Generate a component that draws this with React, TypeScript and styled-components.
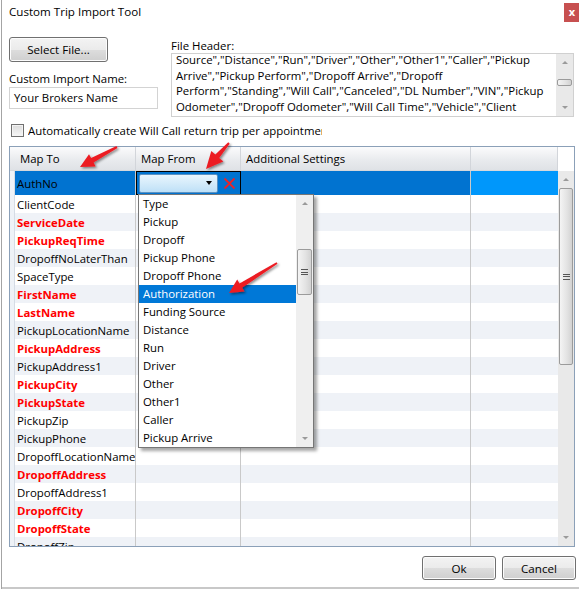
import React from "react";
import styled, { createGlobalStyle } from "styled-components";

const GlobalStyle = createGlobalStyle`
  html, body {
    margin: 0;
    padding: 0;
    background: #fff;
  }
  body {
    font-family: "Open Sans", "Liberation Sans", sans-serif;
    font-size: 11.4px;
    color: #000;
  }
  * {
    box-sizing: border-box;
  }
`;

const Window = styled.div`
  position: relative;
  width: 579px;
  height: 589px;
  overflow: hidden;
  background: #fff;
  box-shadow: inset 1px 0 0 #fff, inset 2px 0 0 #a4a4a4, inset 0 -2px 0 #c8c8c8;
`;

const TitleBar = styled.div`
  display: flex;
  justify-content: space-between;
  align-items: flex-start;
  height: 25px;
  padding-left: 9px;
`;

const Title = styled.div`
  margin-top: 4px;
  line-height: 16px;
  font-size: 11.6px;
`;

const CloseButton = styled.div`
  margin-top: 3px;
  width: 15px;
  height: 19px;
  background: #c75050;
  color: #fff;
  font-weight: 700;
  font-size: 11px;
  line-height: 18px;
  text-align: center;
  padding-left: 1px;
`;

const TopSection = styled.div`
  display: flex;
  margin-top: 12px;
  padding-left: 9px;
`;

const LeftColumn = styled.div`
  display: flex;
  flex-direction: column;
  width: 149px;
`;

const RightColumn = styled.div`
  display: flex;
  flex-direction: column;
  width: 403px;
  margin-left: 13px;
`;

const Button = styled.div<{ $w: number }>`
  width: ${({ $w }) => $w}px;
  height: ${({ $h }: { $h?: number }) => $h || 24}px;
  border: 1px solid #707070;
  border-radius: 3px;
  background: linear-gradient(#f3f3f3 0%, #ebebeb 50%, #dddddd 51%, #cfcfcf 100%);
  display: flex;
  align-items: center;
  justify-content: center;
  font-size: 11.6px;
  box-shadow: inset 0 0 0 1px #fcfcfc;
`;

const Label = styled.div<{ $mt: number }>`
  margin-top: ${({ $mt }) => $mt}px;
  line-height: 14px;
  white-space: nowrap;
`;

const TextInput = styled.div`
  margin-top: 1px;
  height: 22px;
  border: 1px solid #d3d3d3;
  padding-left: 4px;
  line-height: 20px;
`;

const HeaderBox = styled.div`
  display: flex;
  height: 64px;
  border: 1px solid #d0d0d0;
  overflow: hidden;
`;

const HeaderText = styled.div`
  flex: 1;
  overflow: hidden;
  padding-left: 4px;
  margin-top: -2px;
  line-height: 15.6px;
  white-space: nowrap;
`;

const ScrollTrack = styled.div<{ $w: number }>`
  display: flex;
  flex-direction: column;
  width: ${({ $w }) => $w}px;
  flex: 0 0 ${({ $w }) => $w}px;
  background: #e9e9e9;
`;

const ScrollArrow = styled.div<{ $down?: boolean }>`
  flex: 0 0 17px;
  display: flex;
  align-items: center;
  justify-content: center;

  &::after {
    content: "";
    border-left: 3px solid transparent;
    border-right: 3px solid transparent;
    ${({ $down }) =>
      $down ? "border-top: 3px solid #9a9a9a;" : "border-bottom: 3px solid #9a9a9a;"}
  }
`;

const ScrollGap = styled.div<{ $h?: number }>`
  flex: ${({ $h }) => ($h ? `0 0 ${$h}px` : "1")};
`;

const Thumb = styled.div<{ $h: number }>`
  flex: 0 0 ${({ $h }) => $h}px;
  margin: 0 1px;
  border: 1px solid #9b9b9b;
  border-radius: 2px;
  background: linear-gradient(90deg, #f4f4f4, #e2e2e2 60%, #d2d2d2);
  display: flex;
  align-items: center;
  justify-content: center;
`;

const Grip = styled.div`
  width: 7px;
  height: 6px;
  border-top: 1px solid #555;
  border-bottom: 1px solid #555;
  position: relative;

  &::after {
    content: "";
    position: absolute;
    left: 0;
    right: 0;
    top: 1.5px;
    border-top: 1px solid #555;
  }
`;

const CheckRow = styled.div`
  display: flex;
  align-items: center;
  height: 15px;
  margin-top: 6px;
  padding-left: 11px;
`;

const CheckBox = styled.div`
  width: 13px;
  height: 13px;
  border: 1px solid #707070;
  background: linear-gradient(#dcdcdc, #f6f6f6);
  box-shadow: inset 0 0 0 1px #f4f4f4;
`;

const CheckLabel = styled.div`
  width: 294px;
  margin-left: 4px;
  overflow: hidden;
  white-space: nowrap;
  line-height: 15px;
`;

const Grid = styled.div`
  display: flex;
  margin: 8px 0 0 9px;
  width: 566px;
  height: 401px;
  border: 1px solid #8ba0b8;
  overflow: hidden;
`;

const GridMain = styled.div`
  display: flex;
  flex-direction: column;
  width: 548px;
  overflow: hidden;
`;

const GridSide = styled.div`
  display: flex;
  flex-direction: column;
  width: 16px;
`;

const SideHeader = styled.div`
  flex: 0 0 24px;
  background: #fff;
`;

const HeaderRow = styled.div`
  display: flex;
  flex: 0 0 24px;
  background: linear-gradient(#fbfbfc, #e9ebee 55%, #dfe2e6);
  border-bottom: 1px solid #d5d8dc;
`;

const HeaderCell = styled.div<{ $w: number }>`
  width: ${({ $w }) => $w}px;
  flex: 0 0 ${({ $w }) => $w}px;
  border-right: 1px solid #d2d5da;
  padding-left: 5px;
  line-height: 23px;
  white-space: nowrap;
  overflow: hidden;
`;

const Row = styled.div<{ $h?: number; $shaded?: boolean }>`
  display: flex;
  flex: 0 0 ${({ $h }) => $h || 18}px;
  background: ${({ $shaded }) => ($shaded ? "#eff2f7" : "#fff")};
`;

const Strip = styled.div`
  flex: 0 0 5px;
  background: #eef2f7;
  border-right: 1px solid #d5dce5;
`;

const Cell = styled.div<{ $w: number; $bg?: string; $focus?: boolean }>`
  display: flex;
  align-items: center;
  width: ${({ $w }) => $w}px;
  flex: 0 0 ${({ $w }) => $w}px;
  background: ${({ $bg }) => $bg || "transparent"};
  border-right: 1px solid #c9c9c9;
  ${({ $focus }) => ($focus ? "border: 1px solid #000;" : "")}
  padding-left: 2px;
  white-space: nowrap;
  overflow: hidden;
`;

const FieldName = styled.span<{ $req?: boolean }>`
  color: ${({ $req }) => ($req ? "#ff0000" : "#000")};
  font-weight: ${({ $req }) => ($req ? 700 : 400)};
`;

const Combo = styled.div`
  display: flex;
  align-items: center;
  justify-content: flex-end;
  width: 79px;
  height: 19px;
  padding-right: 5px;
  border: 1px solid #5b92c2;
  border-radius: 2px;
  background: linear-gradient(#eaf5fd, #d4ebfa 50%, #bee0f7);

  &::after {
    content: "";
    border-left: 3.5px solid transparent;
    border-right: 3.5px solid transparent;
    border-top: 4px solid #000;
  }
`;

const ClearIcon = styled.svg`
  margin-left: 5px;
`;

const DropList = styled.div`
  position: absolute;
  left: 138px;
  top: 194px;
  width: 176px;
  height: 254px;
  display: flex;
  border: 1px solid #767676;
  background: #fff;
  box-shadow: 3px 3px 3px rgba(0, 0, 0, 0.35);
`;

const DropItems = styled.div`
  flex: 1;
  display: flex;
  flex-direction: column;
`;

const DropItem = styled.div<{ $active?: boolean }>`
  flex: 0 0 18px;
  line-height: 18px;
  padding-left: 4px;
  white-space: nowrap;
  background: ${({ $active }) => ($active ? "#0078d7" : "transparent")};
  color: ${({ $active }) => ($active ? "#fff" : "#000")};
`;

const Footer = styled.div`
  display: flex;
  justify-content: flex-end;
  gap: 6px;
  margin-top: 9px;
  padding-right: 3px;
`;

const Overlay = styled.svg`
  position: absolute;
  left: 0;
  top: 0;
  pointer-events: none;
`;

const headerLines = [
  'Source","Distance","Run","Driver","Other","Other1","Caller","Pickup',
  'Arrive","Pickup Perform","Dropoff Arrive","Dropoff',
  'Perform","Standing","Will Call","Canceled","DL Number","VIN","Pickup',
  'Odometer","Dropoff Odometer","Will Call Time","Vehicle","Client',
];

const fields: [string, boolean][] = [
  ["ClientCode", false],
  ["ServiceDate", true],
  ["PickupReqTime", true],
  ["DropoffNoLaterThan", false],
  ["SpaceType", false],
  ["FirstName", true],
  ["LastName", true],
  ["PickupLocationName", false],
  ["PickupAddress", true],
  ["PickupAddress1", false],
  ["PickupCity", true],
  ["PickupState", true],
  ["PickupZip", false],
  ["PickupPhone", false],
  ["DropoffLocationName", false],
  ["DropoffAddress", true],
  ["DropoffAddress1", false],
  ["DropoffCity", true],
  ["DropoffState", true],
  ["DropoffZip", false],
];

const options = [
  "Type",
  "Pickup",
  "Dropoff",
  "Pickup Phone",
  "Dropoff Phone",
  "Authorization",
  "Funding Source",
  "Distance",
  "Run",
  "Driver",
  "Other",
  "Other1",
  "Caller",
  "Pickup Arrive",
];

const cols = [121, 105, 230, 87];

// snagit style arrow: thin tail, wide head at the tip
function arrowPoints(x1: number, y1: number, x2: number, y2: number, head: number, hw: number) {
  const dx = x2 - x1;
  const dy = y2 - y1;
  const len = Math.hypot(dx, dy);
  const ux = dx / len;
  const uy = dy / len;
  const nx = -uy;
  const ny = ux;
  const bx = x2 - ux * head;
  const by = y2 - uy * head;
  const pts = [
    [x1 + nx * 1, y1 + ny * 1],
    [bx + nx * 2.6, by + ny * 2.6],
    [bx + nx * hw, by + ny * hw],
    [x2, y2],
    [bx - nx * hw, by - ny * hw],
    [bx - nx * 2.6, by - ny * 2.6],
    [x1 - nx * 1, y1 - ny * 1],
  ];
  return pts.map((p) => p.map((v) => v.toFixed(1)).join(",")).join(" ");
}

function Arrow(props: { x1: number; y1: number; x2: number; y2: number; head?: number; hw?: number }) {
  const { x1, y1, x2, y2, head = 14, hw = 7 } = props;
  return <polygon points={arrowPoints(x1, y1, x2, y2, head, hw)} fill="#ec1c24" filter="url(#shadow)" />;
}

export default function App() {
  return (
    <Window>
      <GlobalStyle />
      <TitleBar>
        <Title>Custom Trip Import Tool</Title>
        <CloseButton>x</CloseButton>
      </TitleBar>

      <TopSection>
        <LeftColumn>
          <Button $w={99} style={{ height: 25 }}>
            Select File...
          </Button>
          <Label $mt={10}>Custom Import Name:</Label>
          <TextInput>Your Brokers Name</TextInput>
        </LeftColumn>
        <RightColumn>
          <Label $mt={2}>File Header:</Label>
          <HeaderBox>
            <HeaderText>
              {headerLines.map((line) => (
                <div key={line}>{line}</div>
              ))}
            </HeaderText>
            <ScrollTrack $w={17}>
              <ScrollArrow />
              <ScrollGap $h={8} />
              <Thumb $h={7} />
              <ScrollGap />
              <ScrollArrow $down />
            </ScrollTrack>
          </HeaderBox>
        </RightColumn>
      </TopSection>

      <CheckRow>
        <CheckBox />
        <CheckLabel>Automatically create Will Call return trip per appointment</CheckLabel>
      </CheckRow>

      <Grid>
        <GridMain>
          <HeaderRow>
            <Strip style={{ background: "transparent", borderRight: "none" }} />
            <HeaderCell $w={cols[0]}>Map To</HeaderCell>
            <HeaderCell $w={cols[1]}>Map From</HeaderCell>
            <HeaderCell $w={cols[2]}>Additional Settings</HeaderCell>
            <HeaderCell $w={cols[3]} />
          </HeaderRow>

          <Row $h={24}>
            <Strip />
            <Cell $w={cols[0]} $bg="#0173d0">
              AuthNo
            </Cell>
            <Cell $w={cols[1]} $bg="#0173d0" $focus>
              <Combo />
              <ClearIcon width="13" height="13" viewBox="0 0 13 13">
                <path d="M1.5 1.5 L11.5 11.5 M11.5 1.5 L1.5 11.5" stroke="#e8242a" strokeWidth="1.8" />
              </ClearIcon>
            </Cell>
            <Cell $w={cols[2]} $bg="#0173d0" />
            <Cell $w={cols[3]} $bg="#0097fb" style={{ borderRight: "none" }} />
          </Row>

          {fields.map(([name, req], i) => (
            <Row key={name} $shaded={i % 2 === 1}>
              <Strip />
              <Cell $w={cols[0]}>
                <FieldName $req={req}>{name}</FieldName>
              </Cell>
              <Cell $w={cols[1]} />
              <Cell $w={cols[2]} />
              <Cell $w={cols[3]} style={{ borderRight: "none" }} />
            </Row>
          ))}
        </GridMain>

        <GridSide>
          <SideHeader />
          <ScrollTrack $w={16} style={{ flex: 1 }}>
            <ScrollArrow />
            <Thumb $h={177}>
              <Grip />
            </Thumb>
            <ScrollGap />
            <ScrollArrow $down />
          </ScrollTrack>
        </GridSide>
      </Grid>

      <Footer>
        <Button $w={74}>Ok</Button>
        <Button $w={74}>Cancel</Button>
      </Footer>

      <DropList>
        <DropItems>
          {options.map((opt) => (
            <DropItem key={opt} $active={opt === "Authorization"}>
              {opt}
            </DropItem>
          ))}
        </DropItems>
        <ScrollTrack $w={17} style={{ background: "#efefef" }}>
          <ScrollArrow />
          <ScrollGap $h={37} />
          <Thumb $h={46}>
            <Grip />
          </Thumb>
          <ScrollGap />
          <ScrollArrow $down />
        </ScrollTrack>
      </DropList>

      <Overlay width="579" height="589">
        <defs>
          <filter id="shadow" x="-30%" y="-30%" width="160%" height="160%">
            <feDropShadow dx="1.5" dy="1.5" stdDeviation="1.2" floodColor="#000" floodOpacity="0.45" />
          </filter>
        </defs>
        <Arrow x1={117} y1={147} x2={80} y2={167} />
        <Arrow x1={229} y1={143} x2={206} y2={169} head={17} hw={8} />
        <Arrow x1={277} y1={263} x2={229} y2={293} />
      </Overlay>
    </Window>
  );
}
